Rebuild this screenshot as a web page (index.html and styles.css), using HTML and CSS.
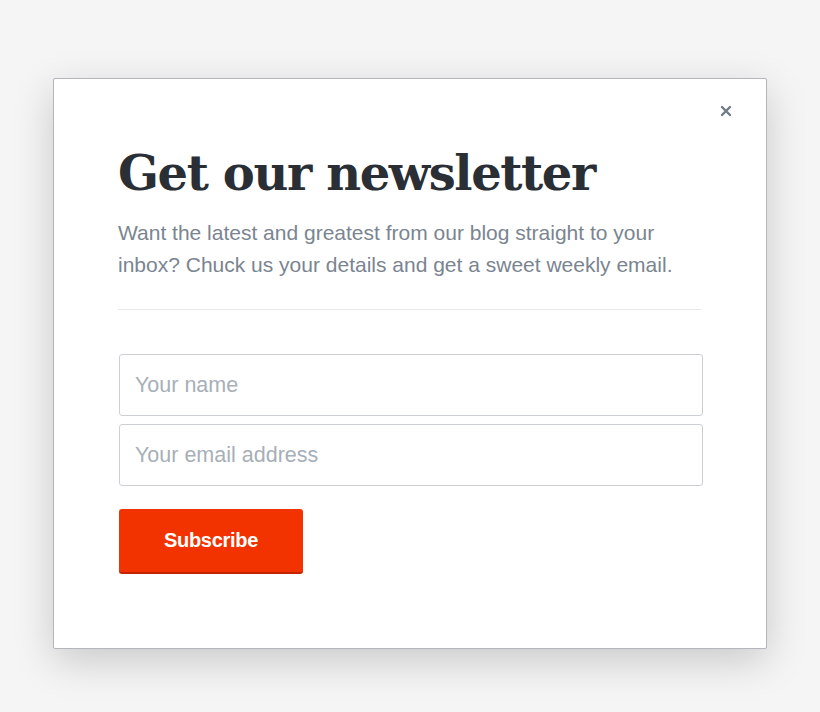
FILE: index.html
```html
<!DOCTYPE html>
<html lang="en">
<head>
<meta charset="utf-8">
<title>Newsletter</title>
<link rel="stylesheet" href="styles.css">
</head>
<body>
<div class="modal">
  <button class="close" type="button" aria-label="Close">
    <svg width="12" height="12" viewBox="0 0 12 12"><path d="M2 2L10 10M10 2L2 10" stroke="#6f7b87" stroke-width="2.4" stroke-linecap="round"/></svg>
  </button>
  <h1 class="title">Get our newsletter</h1>
  <p class="lead">Want the latest and greatest from our blog straight to your inbox? Chuck us your details and get a sweet weekly email.</p>
  <hr class="rule">
  <form class="form">
    <input class="field" type="text" placeholder="Your name">
    <input class="field" type="email" placeholder="Your email address">
    <button class="subscribe" type="button">Subscribe</button>
  </form>
</div>
</body>
</html>
```
FILE: styles.css
```css
html, body {
  margin: 0;
  height: 100%;
}
body {
  background: #f5f5f5;
  padding-top: 78px;
  box-sizing: border-box;
  font-family: "Liberation Sans", Arial, sans-serif;
}
.modal {
  position: relative;
  width: 714px;
  height: 571px;
  margin: 0 auto;
  box-sizing: border-box;
  background: #fff;
  border: 1px solid #b3b6ba;
  border-radius: 2px;
  box-shadow: 0 12px 40px rgba(0, 0, 0, 0.18);
  padding: 64px 64px 0 64px;
}
.close {
  position: absolute;
  top: 26px;
  right: 34px;
  border: 0;
  background: none;
  padding: 0;
  width: 12px;
  height: 12px;
  cursor: pointer;
}
.close svg { display: block; }
.title {
  margin: 0;
  font-family: "DejaVu Serif", serif;
  font-weight: bold;
  font-size: 48px;
  letter-spacing: -1.4px;
  line-height: 60px;
  color: #2a2f35;
}
.lead {
  margin: 14px 0 0;
  font-size: 21px;
  line-height: 32px;
  color: #7a8591;
  width: 578px;
}
.rule {
  margin: 28px 0 0;
  width: 583px;
  border: 0;
  border-top: 1px solid #e6e7e9;
}
.form {
  margin: 44px 0 0 1px;
  display: flex;
  flex-direction: column;
  gap: 8px;
  align-items: flex-start;
}
.field {
  box-sizing: border-box;
  width: 584px;
  height: 62px;
  border: 1px solid #ccd0d6;
  border-radius: 3px;
  padding: 0 15px;
  font-family: "Liberation Sans", Arial, sans-serif;
  font-size: 21.5px;
  color: #333;
  background: #fff;
}
.field::placeholder { color: #a7afb8; }
.subscribe {
  margin-top: 15px;
  width: 184px;
  height: 65px;
  border: 0;
  border-bottom: 2px solid #c42300;
  border-radius: 3px;
  background: #f23300;
  color: #fff;
  font-family: "Liberation Sans", Arial, sans-serif;
  font-weight: bold;
  font-size: 20px;
  letter-spacing: -0.3px;
  cursor: pointer;
}
```
